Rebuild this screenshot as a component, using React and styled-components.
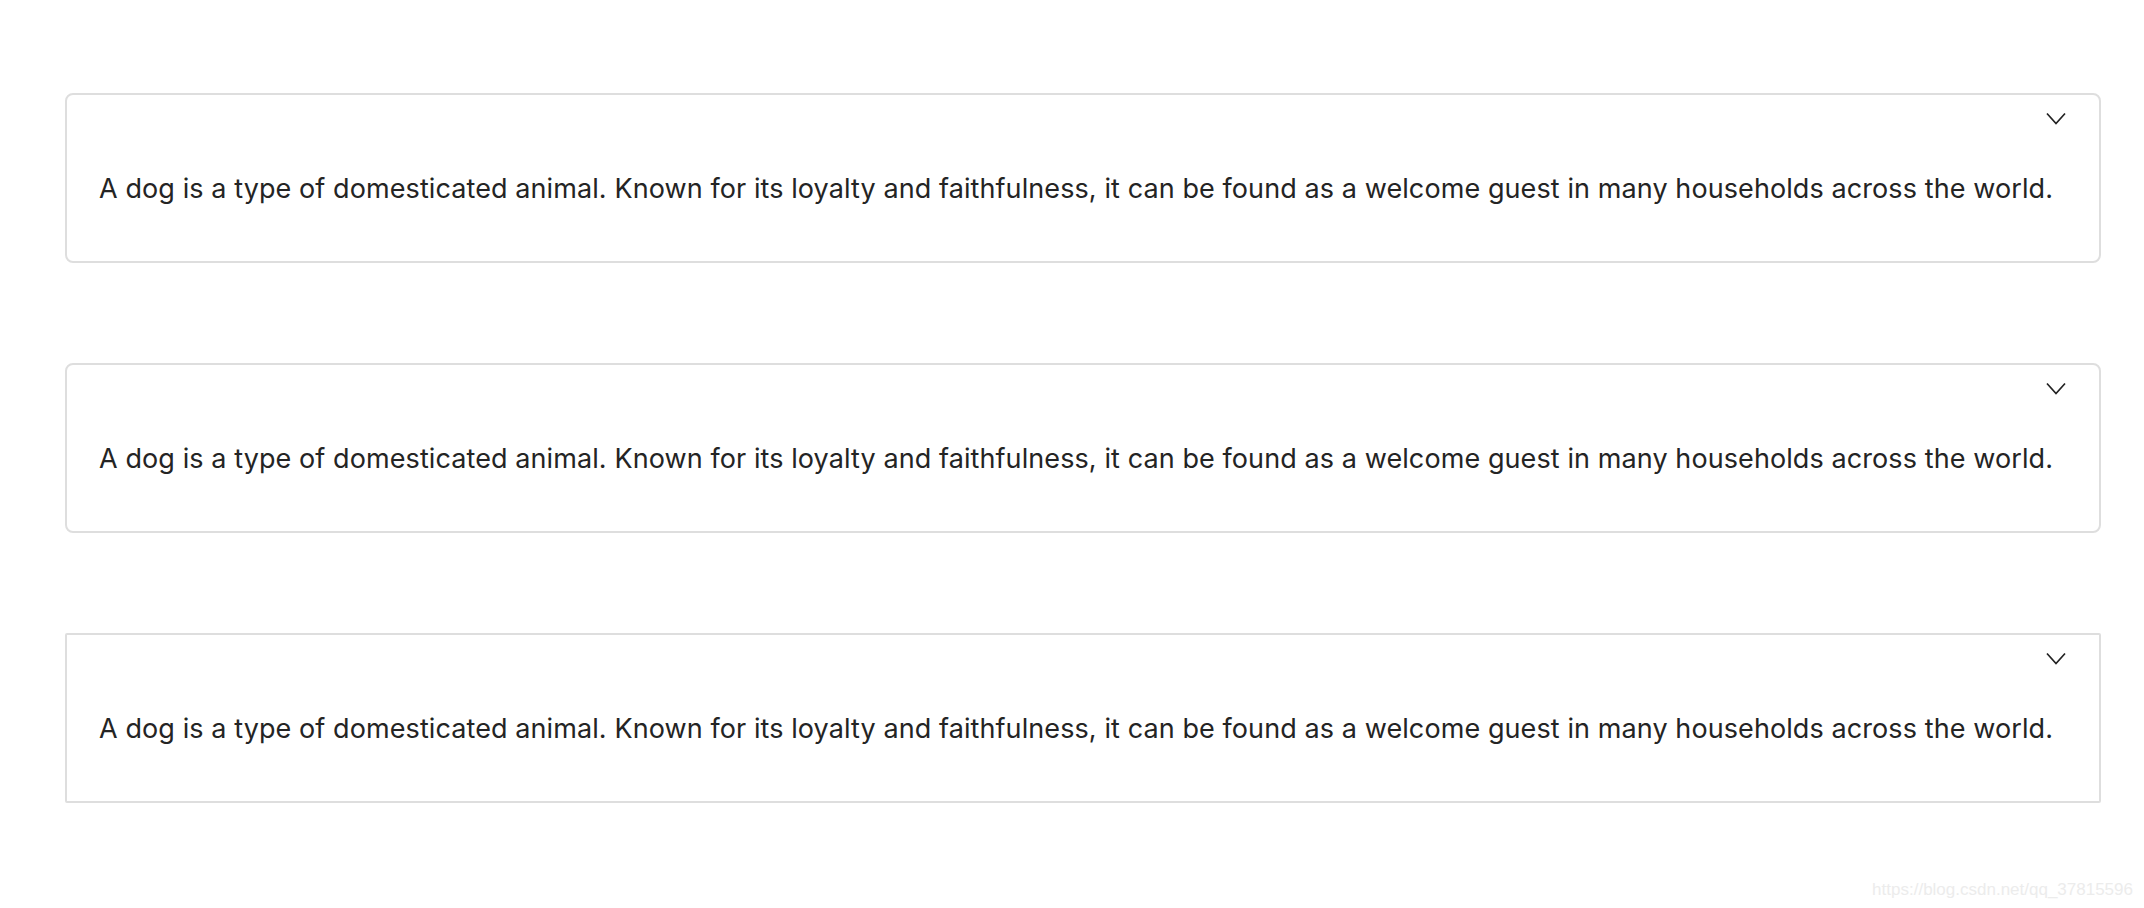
import React from "react";
import styled, { createGlobalStyle } from "styled-components";

const Global = createGlobalStyle`
  html, body { margin: 0; padding: 0; background: #ffffff; }
  body { font-family: Inter, "Noto Sans", "Liberation Sans", sans-serif; }
`;

const Page = styled.div`
  position: relative;
  width: 2144px;
  height: 908px;
  box-sizing: border-box;
  padding: 93px 43px 0 65px;
  display: flex;
  flex-direction: column;
  gap: 100px;
`;

const Card = styled.section`
  box-sizing: border-box;
  height: 170px;
  background: #fff;
  border: 2px solid #dedede;
  border-radius: ${(p) => (p.$square ? "2px" : "8px")};
  padding: 0 33px 0 32px;
  display: flex;
  flex-direction: column;
`;

const Header = styled.div`
  display: flex;
  justify-content: flex-end;
  padding-top: 17px;
  height: 74px;
  box-sizing: border-box;
`;

const Toggle = styled.button`
  border: 0;
  background: transparent;
  padding: 0;
  margin: 0;
  width: 20px;
  height: 13px;
  display: block;
  cursor: pointer;
  svg { display: block; }
`;

const Text = styled.p`
  margin: 0;
  font-size: 27px;
  letter-spacing: 0.09px;
  line-height: 39px;
  color: #242424;
  white-space: nowrap;
`;

const Watermark = styled.div`
  position: absolute;
  right: 11px;
  bottom: 8px;
  font-family: "Liberation Sans", Arial, sans-serif;
  font-size: 17px;
  color: #ececec;
`;

const Chevron = () => (
  <svg width="20" height="13" viewBox="0 0 20 13">
    <polyline points="1,1.5 10,11.5 19,1.5" fill="none" stroke="#222" strokeWidth="1.7" />
  </svg>
);

const TEXT =
  "A dog is a type of domesticated animal. Known for its loyalty and faithfulness, it can be found as a welcome guest in many households across the world.";

export default function App() {
  const items = [false, false, true];
  return (
    <>
      <Global />
      <Page>
        {items.map((sq, i) => (
          <Card key={i} $square={sq}>
            <Header>
              <Toggle aria-label="toggle">
                <Chevron />
              </Toggle>
            </Header>
            <Text>{TEXT}</Text>
          </Card>
        ))}
        <Watermark>https://blog.csdn.net/qq_37815596</Watermark>
      </Page>
    </>
  );
}
